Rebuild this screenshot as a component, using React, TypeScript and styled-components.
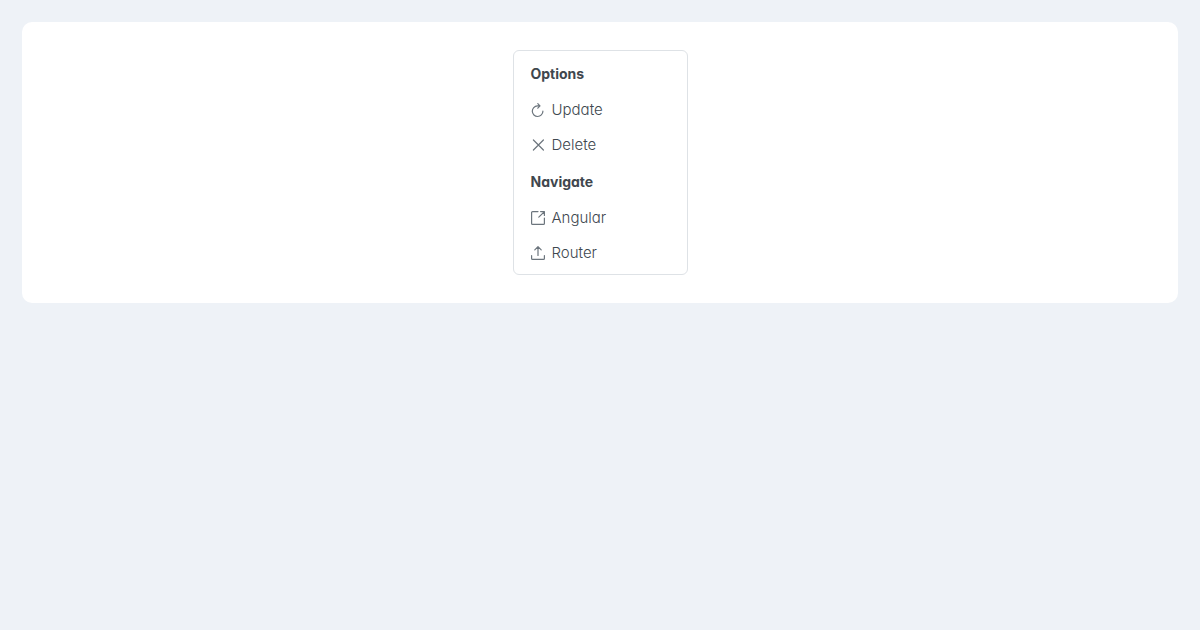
import React from 'react';
import styled, { createGlobalStyle } from 'styled-components';

const GlobalStyle = createGlobalStyle`
  *, *::before, *::after { box-sizing: border-box; }
  body {
    margin: 0;
    padding: 22px;
    background: #eef2f7;
    color: #495057;
    font-family: Inter, 'Open Sans', sans-serif;
    font-size: 14px;
    font-feature-settings: 'cv11';
    -webkit-font-smoothing: antialiased;
  }
`;

const Card = styled.main`
  display: flex;
  justify-content: center;
  padding: 28px;
  background: #ffffff;
  border-radius: 10px;
`;

const Menu = styled.nav`
  width: 175px;
  padding: 3px 0 4px;
  border: 1px solid #dee2e6;
  border-radius: 6px;
  background: #ffffff;
`;

const Heading = styled.h2`
  margin: 0;
  padding: 2px 17px 0;
  font-size: 14px;
  font-weight: 700;
  line-height: 36px;
  color: #3f474e;
`;

const List = styled.ul`
  margin: 0;
  padding: 0;
  list-style: none;
`;

const itemStyle = `
  display: flex;
  align-items: center;
  gap: 7px;
  width: 100%;
  height: 35px;
  padding: 0 17px;
  border: 0;
  background: transparent;
  color: #40484f;
  font: inherit;
  font-size: 15px;
  font-weight: 300;
  font-feature-settings: inherit;
  text-align: left;
  text-decoration: none;
  cursor: pointer;
  &:hover { background: #e9ecef; }
`;

const ItemButton = styled.button`${itemStyle}`;
const ItemLink = styled.a`${itemStyle}`;

const Icon = styled.svg`
  flex: none;
  width: 14px;
  height: 14px;
  overflow: visible;
  fill: none;
  stroke: #6c757d;
  stroke-width: 1.2;
  stroke-linecap: round;
  stroke-linejoin: round;
`;

const icons = {
  refresh: <path d="M8.6 2.9H6.4A5.3 5.3 0 1 0 11.9 8.2M6.8 .6 9 2.9 6.8 5.2" />,
  times: <path d="M2.4 2 12.4 12M12.4 2 2.4 12" />,
  external: <path d="M7 .6H1.6A1 1 0 0 0 .6 1.6V12.4A1 1 0 0 0 1.6 13.4H12.4A1 1 0 0 0 13.4 12.4V7M9.6 .6H13.4V4.4M13.2 .8 7.8 6.2" />,
  upload: <path d="M.6 9.6V12.4A1 1 0 0 0 1.6 13.4H12.4A1 1 0 0 0 13.4 12.4V9.6M7 9.4V.8M3.8 3.9 7 .7 10.2 3.9" />,
};

function MenuIcon({ name }: { name: keyof typeof icons }) {
  return <Icon viewBox="0 0 14 14" aria-hidden="true">{icons[name]}</Icon>;
}

export default function App() {
  return (
    <>
      <GlobalStyle />
      <Card>
        <Menu aria-label="Menu">
          <Heading>Options</Heading>
          <List>
            <li><ItemButton type="button"><MenuIcon name="refresh" />Update</ItemButton></li>
            <li><ItemButton type="button"><MenuIcon name="times" />Delete</ItemButton></li>
          </List>
          <Heading>Navigate</Heading>
          <List>
            <li><ItemLink href="#angular"><MenuIcon name="external" />Angular</ItemLink></li>
            <li><ItemLink href="#router"><MenuIcon name="upload" />Router</ItemLink></li>
          </List>
        </Menu>
      </Card>
    </>
  );
}
